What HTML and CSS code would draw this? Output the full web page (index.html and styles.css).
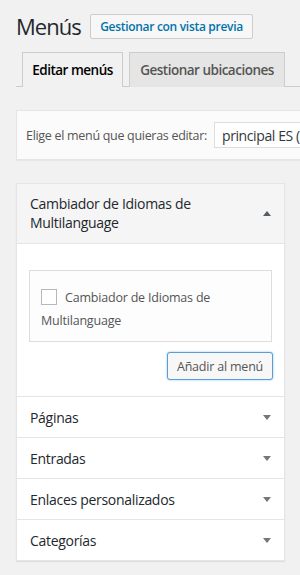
FILE: index.html
```html
<!DOCTYPE html>
<html lang="es">
<head>
<meta charset="utf-8">
<title>Menús</title>
<link rel="stylesheet" href="styles.css">
</head>
<body>
<div class="wrap">
  <div class="title-row">
    <h1 class="title">Menús</h1>
    <a class="title-action">Gestionar con vista previa</a>
  </div>
  <nav class="tabs">
    <a class="tab tab-active">Editar menús</a>
    <a class="tab tab-other">Gestionar ubicaciones</a>
  </nav>
  <div class="manage">
    <span class="manage-label">Elige el menú que quieras editar:</span>
    <div class="select">principal ES (Multilanguage)</div>
  </div>
  <div class="accordion">
    <div class="section section-open">
      <div class="section-title">
        <span class="section-text">Cambiador de Idiomas de Multilanguage</span>
        <span class="arrow arrow-up"></span>
      </div>
      <div class="section-content">
        <div class="item-box">
          <span class="checkbox"></span>Cambiador de Idiomas de Multilanguage
        </div>
        <div class="actions">
          <button class="add-btn">Añadir al menú</button>
        </div>
      </div>
    </div>
    <div class="section"><div class="row-title"><span>Páginas</span><span class="arrow"></span></div></div>
    <div class="section"><div class="row-title"><span>Entradas</span><span class="arrow"></span></div></div>
    <div class="section"><div class="row-title"><span>Enlaces personalizados</span><span class="arrow"></span></div></div>
    <div class="section"><div class="row-title"><span>Categorías</span><span class="arrow"></span></div></div>
  </div>
</div>
</body>
</html>
```
FILE: styles.css
```css
html, body {
  margin: 0;
  padding: 0;
  overflow: hidden;
}
body {
  background: #f1f1f1;
  font-family: "Open Sans", "Noto Sans", sans-serif;
  color: #444;
  width: 300px;
  height: 575px;
}
.wrap {
  padding-left: 16px;
}
.title-row {
  display: flex;
  align-items: center;
  gap: 10px;
  padding-top: 12px;
  height: 29px;
}
.title {
  margin: 0;
  font-size: 22px;
  font-weight: 400;
  line-height: 29px;
  color: #23282d;
  letter-spacing: -1px;
  width: 64px;
}
.title-action {
  display: flex;
  align-items: center;
  box-sizing: border-box;
  height: 25px;
  width: 163px;
  justify-content: center;
  border: 1px solid #ccc;
  border-radius: 2px;
  background: #f7f7f7;
  color: #0073aa;
  font-size: 12px;
  font-weight: 600;
  letter-spacing: -0.3px;
  white-space: nowrap;
}
.tabs {
  display: flex;
  gap: 6px;
  margin-top: 11px;
  padding-left: 6px;
  border-bottom: 1px solid #ccc;
  height: 34px;
}
.tab {
  box-sizing: border-box;
  height: 35px;
  display: flex;
  align-items: center;
  justify-content: center;
  flex: none;
  white-space: nowrap;
  border: 1px solid #ccc;
  border-bottom: none;
  background: #e5e5e5;
  color: #555;
  font-size: 13.5px;
  font-weight: 600;
  letter-spacing: -0.5px;
}
.tab-active {
  background: #f1f1f1;
  color: #000;
  width: 101px;
}
.tab-other {
  width: 156px;
}
.manage {
  display: flex;
  align-items: center;
  box-sizing: border-box;
  margin-top: 23px;
  height: 50px;
  width: 400px;
  padding-left: 9px;
  background: #fbfbfb;
  border: 1px solid #e5e5e5;
  box-shadow: 0 1px 1px rgba(0,0,0,0.04);
}
.manage-label {
  font-size: 12.5px;
  color: #555;
  letter-spacing: -0.3px;
  width: 188px;
  white-space: nowrap;
}
.select {
  box-sizing: border-box;
  height: 26px;
  display: flex;
  align-items: center;
  padding-left: 7px;
  border: 1px solid #ddd;
  background: #fff;
  color: #32373c;
  font-size: 14px;
  letter-spacing: -0.4px;
  white-space: nowrap;
}
.accordion {
  margin-top: 23px;
  width: 269px;
  box-sizing: border-box;
  border: 1px solid #e5e5e5;
  background: #fff;
  box-shadow: 0 1px 1px rgba(0,0,0,0.08);
}
.section + .section {
  border-top: 1px solid #e5e5e5;
}
.section-title {
  display: flex;
  align-items: center;
  justify-content: space-between;
  padding: 10px 13px 11px 13px;
  background: #f5f5f5;
  border-bottom: 1px solid #e5e5e5;
}
.section-text {
  font-size: 14px;
  line-height: 19px;
  color: #23282d;
  width: 200px;
  letter-spacing: -0.3px;
}
.arrow {
  width: 0;
  height: 0;
  border-left: 4px solid transparent;
  border-right: 4px solid transparent;
  border-top: 5px solid #72777c;
}
.arrow-up {
  border-top: none;
  border-bottom: 5px solid #555d66;
}
.section-content {
  padding: 26px 12px 16px 12px;
}
.item-box {
  box-sizing: border-box;
  border: 1px solid #ddd;
  background: #fdfdfd;
  padding: 15px 11px 10px 11px;
  height: 72px;
  font-size: 12.5px;
  line-height: 23px;
  color: #555;
  letter-spacing: -0.2px;
}
.checkbox {
  display: inline-block;
  box-sizing: border-box;
  width: 16px;
  height: 16px;
  border: 1px solid #b4b9be;
  background: #fff;
  vertical-align: -3px;
  margin-right: 8px;
}
.actions {
  display: flex;
  justify-content: flex-end;
  margin-top: 10px;
}
.add-btn {
  box-sizing: border-box;
  height: 28px;
  width: 106px;
  padding: 0;
  border: 1px solid #5b9dd9;
  border-radius: 3px;
  background: #f7f7f7;
  box-shadow: 0 0 2px rgba(30,140,190,0.6);
  color: #555;
  font-family: inherit;
  font-size: 12.5px;
  letter-spacing: -0.2px;
  margin-right: -1px;
}
.row-title {
  display: flex;
  align-items: center;
  justify-content: space-between;
  height: 40px;
  padding: 0 13px;
  font-size: 14px;
  color: #23282d;
  letter-spacing: -0.3px;
}
```
